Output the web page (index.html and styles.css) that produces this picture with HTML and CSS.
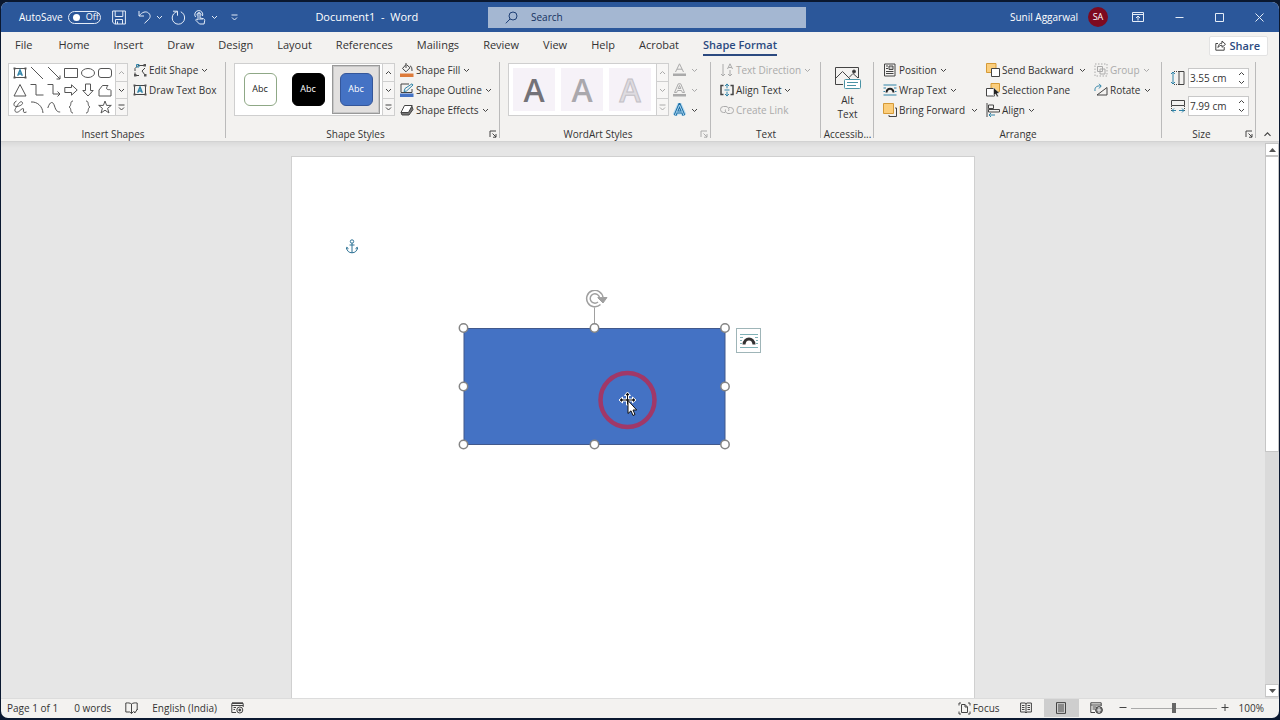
FILE: index.html
```html
<!DOCTYPE html>
<html lang="en">
<head>
<meta charset="utf-8">
<title>Document1 - Word</title>
<link rel="stylesheet" href="styles.css">
</head>
<body>
<svg class="sprite" aria-hidden="true">
  <symbol id="chev" viewBox="0 0 7 5"><path d="M1 1l2.500 2.500L6 1"/></symbol>
  <symbol id="chev-up" viewBox="0 0 7 5"><path d="M1 4l2.500-2.500L6 4"/></symbol>
  <symbol id="more" viewBox="0 0 7 7"><path d="M0.500 1h6M1 3.500l2.500 2.500L6 3.500"/></symbol>
  <symbol id="launch" viewBox="0 0 8 8"><path d="M1 7V1h6M3.500 3.500L7 7M7 4v3.200H4"/></symbol>
</svg>
<div class="app">
  <header class="titlebar">
    <div class="quick">
      <label class="autosave">AutoSave <input type="checkbox" class="hidden-check"><span class="switch"><i></i>Off</span></label>
      <button class="tb save" aria-label="Save"><svg width="14" height="15" viewBox="0 0 14 15"><path d="M.6 1h12.800v13H2.500L.6 12zM3.200 1v5.500h7.600V1M3.500 14V9.500h7V14M5.500 14v-2.500"/></svg></button>
      <button class="tb undo" aria-label="Undo"><svg width="13" height="14" viewBox="0 0 13 14"><path d="M1 1v5h5M1.200 5.800C4 2 8 .8 10.500 3s2 5-.5 7L6.500 13.300"/></svg><svg class="ic" width="7" height="5"><use href="#chev"/></svg></button>
      <button class="tb" aria-label="Redo"><svg width="15" height="15" viewBox="0 0 15 15"><path d="M2 1.200h4.500v4.500M6.300 1.500C3 2.500 1.200 5 1.200 8a6.200 6.200 0 0 0 12.400 0c0-3-1.400-5-3.800-6.200"/></svg></button>
      <button class="tb touch" aria-label="Touch mode"><svg width="12" height="15" viewBox="0 0 12 15"><path d="M1.600 7A4 4 0 1 1 8.500 6M3.200 5.500a2 2 0 1 1 3.600 0M4 10V4.200c0-1.500 2-1.500 2 0V8l3.500.7c1 .3 1.300 1 1.200 2l-.6 3.300H5.500L2 10.500c-.8-1 .5-1.700 2-.5M6 8v2M8 8.500V10"/></svg><svg class="ic" width="7" height="5"><use href="#chev"/></svg></button>
      <button class="tb" aria-label="Customize"><svg class="ic" width="7" height="7"><use href="#more"/></svg></button>
      <span class="doc-title">Document1 &nbsp;-&nbsp; Word</span>
    </div>
    <label class="search"><svg width="13" height="13" viewBox="0 0 13 13"><circle cx="8" cy="5" r="4"/><path d="M5 8L.8 12.300"/></svg><input type="text" placeholder="Search" aria-label="Search"></label>
    <div class="account">
      <span>Sunil Aggarwal</span><span class="avatar">SA</span>
      <button class="tb" aria-label="Ribbon display"><svg width="12" height="10" viewBox="0 0 12 10"><path d="M.5.5h11v9H.5zM.5 2.500h11M6 8.500v-4M4 6l2-2 2 2"/></svg></button>
      <button class="tb" aria-label="Minimize"><svg width="9" height="9" viewBox="0 0 9 9"><path d="M.5 4.500h8"/></svg></button>
      <button class="tb" aria-label="Maximize"><svg width="9" height="9" viewBox="0 0 9 9"><path d="M.5.500h8v8h-8z"/></svg></button>
      <button class="tb" aria-label="Close"><svg width="9" height="9" viewBox="0 0 9 9"><path d="M.5.500l8 8M8.500.500l-8 8"/></svg></button>
    </div>
  </header>

  <nav class="tabs">
    <button class="file">File</button><button>Home</button><button>Insert</button><button>Draw</button><button>Design</button><button>Layout</button><button>References</button><button>Mailings</button><button>Review</button><button>View</button><button>Help</button><button>Acrobat</button><button class="active">Shape Format</button>
    <button class="share"><svg width="11" height="11" viewBox="0 0 11 11"><path d="M3 3.500H.8v6.700h8.400V7M3 7.500C3.200 4.500 5 3.200 7 3.200V1l3.500 3.300L7 7.300V5.200C5.500 5.200 4 6 3 7.500z"/></svg>Share</button>
  </nav>

  <div class="ribbon">
    <section class="group g-insert">
      <div class="body">
        <div class="gallery">
          <div class="shapes">
            <button aria-label="Text box"><svg viewBox="0 0 14 14"><path d="M1.500 2.500h11v9h-11z"/><path class="dot" d="M.5 1.500h2v2h-2zM11.500 1.500h2v2h-2zM.5 10.500h2v2h-2zM11.500 10.500h2v2h-2z"/><path class="blue bold" d="M4.700 9.800L7 4l2.300 5.800M5.500 8h3"/></svg></button>
            <button aria-label="Line"><svg viewBox="0 0 14 14"><path d="M1 1l12 12"/></svg></button>
            <button aria-label="Arrow"><svg viewBox="0 0 14 14"><path d="M1 1l12 12M13 9.500V13H9.500"/></svg></button>
            <button aria-label="Rectangle"><svg viewBox="0 0 14 14"><path d="M.5 2.500h13v9H.5z"/></svg></button>
            <button aria-label="Oval"><svg viewBox="0 0 14 14"><ellipse cx="7" cy="7" rx="6.500" ry="4.500"/></svg></button>
            <button aria-label="Rounded rectangle"><svg viewBox="0 0 14 14"><rect x=".5" y="2.500" width="13" height="9" rx="2.500"/></svg></button>
            <button aria-label="Triangle"><svg viewBox="0 0 14 14"><path d="M7 1.500l6 11.500H1z"/></svg></button>
            <button aria-label="Elbow"><svg viewBox="0 0 14 14"><path d="M.5 1.500H6v10.500h7.500"/></svg></button>
            <button aria-label="Elbow arrow"><svg viewBox="0 0 14 14"><path d="M.5 1.500H6v9.500h7M10.500 8.500L13 11l-2.500 2.500"/></svg></button>
            <button aria-label="Right arrow"><svg viewBox="0 0 14 14"><path d="M.8 4.500h6.700V1.800L13.200 7l-5.700 5.200V9.500H.8z"/></svg></button>
            <button aria-label="Down arrow"><svg viewBox="0 0 14 14"><path d="M4.500 1h5v6.500h2.700L7 13 1.800 7.500h2.700z"/></svg></button>
            <button aria-label="Freeform"><svg viewBox="0 0 14 14"><path d="M1 13V7l3.500-4.500H10C8.500 4 8 6 9.500 6.500s3-.5 3.500 1V13z"/></svg></button>
            <button aria-label="Scribble"><svg viewBox="0 0 14 14"><path d="M3.500 1C0 2.500 0 7 4 6.500S11 3.500 9 2 4.500 5 2.500 8.500 4 13.500 6.500 11s4.500-3.500 4-1 .5 3 3 2"/></svg></button>
            <button aria-label="Arc"><svg viewBox="0 0 14 14"><path d="M1 2c6-.5 11.500 4 12 11"/></svg></button>
            <button aria-label="Curve"><svg viewBox="0 0 14 14"><path d="M.8 8C3 1 6 1 7.500 6s3 6 5.700 6"/></svg></button>
            <button aria-label="Left brace"><svg viewBox="0 0 14 14"><path d="M9 1C5.500 1 8 6 5 7c3 1 .5 6 4 6"/></svg></button>
            <button aria-label="Right brace"><svg viewBox="0 0 14 14"><path d="M5 1c3.500 0 1 5 4 6-3 1-.5 6-4 6"/></svg></button>
            <button aria-label="Star"><svg viewBox="0 0 14 14"><path d="M7 1l1.600 4.400h4.700L9.600 8.300 11 13 7 10.200 3 13l1.400-4.700L.7 5.400h4.700z"/></svg></button>
          </div>
          <div class="scroller"><button class="off" aria-label="Up"><svg class="ic" width="7" height="5"><use href="#chev-up"/></svg></button><button aria-label="Down"><svg class="ic" width="7" height="5"><use href="#chev"/></svg></button><button aria-label="More"><svg class="ic" width="7" height="7"><use href="#more"/></svg></button></div>
        </div>
        <div class="col">
          <button class="cmd"><svg width="14" height="14" viewBox="0 0 14 14"><path d="M2 12.500V9.500M2 8V5.500L5 2.500h6M6 12.500H3M12 5L9 8l3 4"/><path class="dot" d="M1 11h2.500v2.500H1zM10.500 1H13v2.500h-2.500zM11 11h2.500v2.500H11z"/><path class="blue" d="M3.500 1.500H6V4H3.500z"/></svg>Edit Shape<svg class="ic" width="7" height="5"><use href="#chev"/></svg></button>
          <button class="cmd"><svg width="14" height="14" viewBox="0 0 14 14"><path d="M1.500 2.500h11v9h-11z"/><path class="dot" d="M.5 1.500h2v2h-2zM11.500 1.500h2v2h-2zM.5 10.500h2v2h-2zM11.500 10.500h2v2h-2z"/><path class="blue bold" d="M4.700 9.800L7 4l2.300 5.800M5.500 8h3"/></svg>Draw Text Box</button>
        </div>
      </div>
      <div class="label">Insert Shapes</div>
    </section>

    <section class="group g-styles">
      <div class="body">
        <div class="gallery">
          <div class="cells"><button><span class="swatch outline">Abc</span></button><button><span class="swatch black">Abc</span></button><button class="selected"><span class="swatch fill">Abc</span></button></div>
          <div class="scroller"><button aria-label="Up"><svg class="ic" width="7" height="5"><use href="#chev-up"/></svg></button><button aria-label="Down"><svg class="ic" width="7" height="5"><use href="#chev"/></svg></button><button aria-label="More"><svg class="ic" width="7" height="7"><use href="#more"/></svg></button></div>
        </div>
        <div class="col">
          <button class="cmd"><svg width="14" height="14" viewBox="0 0 14 14"><path d="M6 0v5M6 1.500L2.500 5.500 6 8.800 10 4.800 7 2M10 3c1.500 0 2 2 2 5"/><path fill="#dd7b3b" stroke="none" d="M0 10.500h13.500V14H0z"/></svg>Shape Fill<svg class="ic" width="7" height="5"><use href="#chev"/></svg></button>
          <button class="cmd"><svg width="14" height="14" viewBox="0 0 14 14"><path d="M9 1H1v8.500h11V6"/><path class="blue" d="M4 8.500l1-3L12 .8 13 2 6.500 8z"/><path fill="#4472c4" stroke="none" d="M0 10.500h13.500V14H0z"/></svg>Shape Outline<svg class="ic" width="7" height="5"><use href="#chev"/></svg></button>
          <button class="cmd"><svg width="14" height="14" viewBox="0 0 14 14"><path fill="#777" d="M1 9.500l1 2.500h7l4-5.500-1-3-4 6z"/><path fill="#fff" d="M4.500 2.500h7.700L8.500 9.500H1z"/></svg>Shape Effects<svg class="ic" width="7" height="5"><use href="#chev"/></svg></button>
        </div>
      </div>
      <div class="label with-launcher">Shape Styles<button class="launcher" aria-label="Format shape"><svg class="ic" width="8" height="8"><use href="#launch"/></svg></button></div>
    </section>

    <section class="group g-wordart">
      <div class="body">
        <div class="gallery">
          <div class="cells art"><button class="a1">A</button><button class="a2">A</button><button class="a3">A</button></div>
          <div class="scroller off"><button aria-label="Up"><svg class="ic" width="7" height="5"><use href="#chev-up"/></svg></button><button aria-label="Down"><svg class="ic" width="7" height="5"><use href="#chev"/></svg></button><button aria-label="More"><svg class="ic" width="7" height="7"><use href="#more"/></svg></button></div>
        </div>
        <div class="col">
          <button class="cmd off wide" aria-label="Text fill"><svg width="15" height="14" viewBox="0 0 15 14"><path d="M3.500 9L7.500 .8 11.500 9M5 6.200h5"/><path fill="#aaa" stroke="none" d="M1 10.500h13V13H1z"/></svg><svg class="ic" width="7" height="5"><use href="#chev"/></svg></button>
          <button class="cmd off wide" aria-label="Text outline"><svg width="15" height="14" viewBox="0 0 15 14"><path d="M2.500 9.500L6.300.8h2.400l3.800 8.700h-2.200L9.500 7.500h-4l-.8 2zM6.200 5.500h2.600L7.500 2.500z"/><path fill="#aaa" stroke="none" d="M1 11h13v2.500H1z"/></svg><svg class="ic" width="7" height="5"><use href="#chev"/></svg></button>
          <button class="cmd wide" aria-label="Text effects"><svg width="15" height="14" viewBox="0 0 15 14"><path class="glow" d="M3 12L7.500 2 12 12M5 9h5"/><path class="deep" d="M3 12.500L7.500 2 12 12.500M5 9h5"/><path class="core" d="M3 12.500L7.500 2 12 12.500M5 9h5"/></svg><svg class="ic" width="7" height="5"><use href="#chev"/></svg></button>
        </div>
      </div>
      <div class="label with-launcher">WordArt Styles<button class="launcher off" aria-label="Format text"><svg class="ic" width="8" height="8"><use href="#launch"/></svg></button></div>
    </section>

    <section class="group g-text">
      <div class="body">
        <div class="col">
          <button class="cmd off"><svg width="14" height="14" viewBox="0 0 14 14"><path d="M3 1v12M1 11l2 2 2-2M10 7v6M8 11l2 2 2-2M7.500 6L10 .8 12.500 6M8.300 4.500h3.400"/></svg>Text Direction<svg class="ic" width="7" height="5"><use href="#chev"/></svg></button>
          <button class="cmd"><svg width="14" height="14" viewBox="0 0 14 14"><path stroke-width="1.500" d="M3.500 2.500H1v9h2.500M10.500 2.500H13v9h-2.500"/><path class="blue" d="M4.500 7h5M7 .8v4.500M5 3l2-2 2 2M7 13.200V8.700M5 11l2 2 2-2"/></svg>Align Text<svg class="ic" width="7" height="5"><use href="#chev"/></svg></button>
          <button class="cmd off"><svg width="14" height="14" viewBox="0 0 14 14"><path d="M5 9.500H3.500a3 3 0 0 1 0-6H6a3 3 0 0 1 2.500 4.500M9 4.500h1.500a3 3 0 0 1 0 6H8a3 3 0 0 1-2.500-4"/></svg>Create Link</button>
        </div>
      </div>
      <div class="label">Text</div>
    </section>

    <section class="group g-alt">
      <div class="body">
        <button class="big"><svg width="28" height="26" viewBox="0 0 28 26"><path d="M9 19.500H1.500v-17h23V13"/><path d="M2 13l6.500-6.500L16 14M15 12.500l4-4 5 4.500"/><circle cx="20" cy="6.500" r="1.500" fill="#333"/><rect x="10.500" y="14.500" width="16" height="9" rx="1" fill="#fff" stroke="#4a93a5"/><path stroke="#4a93a5" d="M13 17.500h11M13 20.500h9"/></svg><span>Alt<br>Text</span></button>
      </div>
      <div class="label">Accessib...</div>
    </section>

    <section class="group g-arrange">
      <div class="body">
        <div class="col c1">
          <button class="cmd"><svg width="14" height="14" viewBox="0 0 14 14"><path d="M1.500 1h10.500v12H1.500zM3 10.500h7.500M3 8.500h7.500M3 3h2M3 5.500h2"/><path fill="#ccc" d="M6 3h4v3.500H6z"/></svg>Position<svg class="ic" width="7" height="5"><use href="#chev"/></svg></button>
          <button class="cmd"><svg width="14" height="14" viewBox="0 0 14 14"><path class="blue" d="M.5 2h13M.5 12h13M.5 5H3M11 5h2.500M.5 8.500H2M12 8.500h1.500"/><path stroke="#222" stroke-width="2" d="M3.500 9.500C4 4.500 10 4.500 10.500 9.500"/></svg>Wrap Text<svg class="ic" width="7" height="5"><use href="#chev"/></svg></button>
          <button class="cmd split"><svg width="14" height="14" viewBox="0 0 14 14"><path d="M12 5h1.500v8.500H6V12"/><path fill="#fbce7c" stroke="#d59a37" d="M.5.500h10v10H.5z"/></svg>Bring Forward<svg class="ic" width="7" height="5"><use href="#chev"/></svg></button>
        </div>
        <div class="col c2">
          <button class="cmd split"><svg width="14" height="14" viewBox="0 0 14 14"><path fill="#fbce7c" stroke="#d59a37" d="M.5.500h9.500v9H.5z"/><path fill="#fff" d="M5.500 5.500h8v8h-8z"/></svg>Send Backward<svg class="ic" width="7" height="5"><use href="#chev"/></svg></button>
          <button class="cmd"><svg width="14" height="14" viewBox="0 0 14 14"><path fill="#fbce7c" stroke="#d59a37" d="M5 .5h8.500v8H5z"/><path fill="#fff" d="M.5 5.500h8v7.500h-8z"/><path fill="#222" stroke="#fff" stroke-width=".5" d="M7.500 4.500v8l2-1.500 1.500 3 1.500-.7-1.400-2.800 2.400-.5z"/></svg>Selection Pane</button>
          <button class="cmd"><svg width="14" height="14" viewBox="0 0 14 14"><path d="M1 0v14M2.500 2h5v3.500h-5zM2.500 6.500h11V9h-11z"/><path class="blue" d="M3 12h6M5 10l-2 2 2 2"/></svg>Align<svg class="ic" width="7" height="5"><use href="#chev"/></svg></button>
        </div>
        <div class="col">
          <button class="cmd off"><svg width="14" height="14" viewBox="0 0 14 14"><path d="M3.500 3.500h5v5h-5zM6 6h5v5H6z"/><path stroke-dasharray="1.500 1.500" d="M1 1h12v12H1z"/></svg>Group<svg class="ic" width="7" height="5"><use href="#chev"/></svg></button>
          <button class="cmd"><svg width="14" height="14" viewBox="0 0 14 14"><path d="M13 4.500v7.500H3z"/><path class="blue" d="M1 8C.5 4 3 2.500 7 3M5 .8L7.200 3 5 5.500"/></svg>Rotate<svg class="ic" width="7" height="5"><use href="#chev"/></svg></button>
        </div>
      </div>
      <div class="label">Arrange</div>
    </section>

    <section class="group g-size">
      <div class="sizes">
        <label class="size"><svg width="15" height="16" viewBox="0 0 15 16"><path d="M9 1.500h5v13H9z"/><path stroke-dasharray="1 1" d="M4 1.500h5M4 14.500h5"/><path class="blue" d="M3 2v12M1 4l2-2 2 2M1 12l2 2 2-2"/></svg><span class="spin"><input type="text" value="3.55 cm" aria-label="Height"><span class="steps"><button aria-label="Increase height"><svg class="ic" width="7" height="5"><use href="#chev-up"/></svg></button><button aria-label="Decrease height"><svg class="ic" width="7" height="5"><use href="#chev"/></svg></button></span></span></label>
        <label class="size"><svg width="15" height="16" viewBox="0 0 15 16"><path d="M1.500 2.500h13v5h-13z"/><path stroke-dasharray="1 1" d="M1.500 8v5M14.500 8v5"/><path class="blue" d="M2 12.500h4M9 12.500h5M4 10.500l-2 2 2 2M12 10.500l2 2-2 2"/></svg><span class="spin"><input type="text" value="7.99 cm" aria-label="Width"><span class="steps"><button aria-label="Increase width"><svg class="ic" width="7" height="5"><use href="#chev-up"/></svg></button><button aria-label="Decrease width"><svg class="ic" width="7" height="5"><use href="#chev"/></svg></button></span></span></label>
      </div>
      <div class="label with-launcher">Size<button class="launcher" aria-label="Layout"><svg class="ic" width="8" height="8"><use href="#launch"/></svg></button></div>
    </section>
    <button class="collapse" aria-label="Collapse ribbon"><svg class="ic" width="9" height="6"><use href="#chev-up"/></svg></button>
  </div>

  <main class="work">
    <div class="desk">
      <div class="page">
        <svg class="anchor" width="12" height="15" viewBox="0 0 12 15"><circle cx="6" cy="2.500" r="1.700"/><path d="M6 4.200V14M3.500 6h5M.7 8.500C.7 12 3 13.800 6 13.800s5.300-1.800 5.300-5.300M.3 10.300l.5-2 1.700 1.400M11.700 10.300l-.5-2-1.700 1.400"/></svg>
        <svg class="drawing" width="310" height="170" viewBox="0 0 310 170">
          <rect x="14" y="38.500" width="261" height="116" fill="#4472c4" stroke="#41598c"/>
          <g fill="none" stroke="#a0a0a0">
            <path d="M144.500 17v18"/>
            <circle cx="145" cy="8.500" r="6.500" stroke="#fff" stroke-width="5"/>
            <path stroke-width="1.500" d="M150.500 14.500A8.200 8.200 0 1 1 153 7.500"/>
            <path stroke-width="1.500" d="M148 12A4.700 4.700 0 1 1 149.500 7.500"/>
            <path fill="#a0a0a0" d="M147.500 7.500h3M152.500 7.500h4.500l-4 5.500-5-5z"/>
          </g>
          <g fill="#fff" stroke="#858585" stroke-width="1.500">
            <circle cx="13.500" cy="38" r="4.200"/><circle cx="144.500" cy="38" r="4.200"/><circle cx="275" cy="38" r="4.200"/>
            <circle cx="13.500" cy="96.500" r="4.200"/><circle cx="275" cy="96.500" r="4.200"/>
            <circle cx="13.500" cy="154.500" r="4.200"/><circle cx="144.500" cy="154.500" r="4.200"/><circle cx="275" cy="154.500" r="4.200"/>
          </g>
          <circle cx="177.500" cy="110" r="27" fill="none" stroke="#a03868" stroke-width="4.500"/>
          <g fill="#111" stroke="#fff" stroke-width="1">
            <path d="M177.500 102l3 3.500h-2v3.500h4v-2l3.500 3-3.500 3v-2h-4v4h-2v-4h-4v2l-3.500-3 3.500-3v2h4v-3.500h-2z"/>
            <path fill="#fff" stroke="#111" d="M178 110.500v13l3-2.700 2 4.700 2-1-2-4.500h3.700z"/>
          </g>
        </svg>
        <button class="layout-options" aria-label="Layout Options"><svg width="20" height="20" viewBox="0 0 20 20"><path class="teal" d="M1 3.500h18M1 16.500h18M1 6.500h3M16 6.500h3M1 9.500h2M17 9.500h2M1 12.500h2M17 12.500h2"/><path stroke="#333" stroke-width="3" d="M5 13.500C5.500 6 14.500 6 15 13.500"/></svg></button>
      </div>
    </div>
    <div class="vscroll"><button aria-label="Scroll up"><svg width="7" height="4" viewBox="0 0 7 4"><path d="M0 4l3.500-4L7 4z"/></svg></button><div class="track"><div class="thumb"></div></div><button aria-label="Scroll down"><svg width="7" height="4" viewBox="0 0 7 4"><path d="M0 0l3.500 4L7 0z"/></svg></button></div>
  </main>

  <footer class="status">
    <span>Page 1 of 1</span><span>0 words</span>
    <button aria-label="Proofing"><svg width="13" height="12" viewBox="0 0 13 12"><path d="M6.500 2C5 .8 3 .8.800 1v9h4l1.700 1.500L8 10M6.500 2v9.500M6.500 2C8 .8 10 .8 12.200 1v7M8.500 9l1.300 2 2.700-4"/></svg></button>
    <span>English (India)</span>
    <button aria-label="Macro recording"><svg width="13" height="12" viewBox="0 0 13 12"><path d="M5 10.500H.8v-9h11.400V5M.8 3.500h11.400M2.500 5.500H5M2.500 7.500H4M1 .8h11"/><circle cx="8.800" cy="8" r="3"/><circle cx="8.800" cy="8" r="1" fill="#333"/></svg></button>
    <div class="views">
      <button class="focus"><svg width="13" height="13" viewBox="0 0 13 13"><path d="M3 1H1v2.500M10 1h2v2.500M1 9.500V12h2M12 9.500V12h-2M3.500 2.500h3.500l2.500 2.500v5.500h-6zM7 2.500V5h2.500"/></svg>Focus</button>
      <button class="view" aria-label="Read mode"><svg width="12" height="12" viewBox="0 0 12 12"><path d="M6 1.500v9.500M.6 1H5l1 .7L7 1h4.400v9H7l-1 1-1-1H.6zM2 3.500h2.500M2 5.500h2.500M2 7.500h2.500M7.500 3.500H10M7.500 5.500H10M7.500 7.500H10"/></svg></button>
      <button class="view on" aria-label="Print layout"><svg width="12" height="12" viewBox="0 0 12 12"><path d="M1.500.600h9v10.800h-9zM3 3h6M3 5h6M3 7h6M3 9h6"/></svg></button>
      <button class="view" aria-label="Web layout"><svg width="13" height="12" viewBox="0 0 13 12"><path d="M5 10.500H.8V.8h10.400V4M.8 3h10.400M2.500 5h4M2.500 7H5"/><circle cx="9" cy="8" r="3.400" fill="#777"/><path stroke="#eee" d="M9 5v6M7 8h4"/></svg></button>
      <button class="zoom-btn" aria-label="Zoom out"><svg width="8" height="8" viewBox="0 0 8 8"><path d="M.5 3.500h7"/></svg></button>
      <input type="range" min="0" max="100" value="50" aria-label="Zoom">
      <button class="zoom-btn" aria-label="Zoom in"><svg width="8" height="8" viewBox="0 0 8 8"><path d="M.5 3.500h7M4 0v7"/></svg></button>
      <span class="pct">100%</span>
    </div>
  </footer>
</div>
</body>
</html>
```

FILE: styles.css
```css
* { box-sizing: border-box; }
body {
  margin: 0;
  height: 100vh;
  padding: 2px 1px;
  background: #0a1830;
  font-family: "Open Sans", "Noto Sans", sans-serif;
  font-size: 10px;
  line-height: 14px;
  color: #333;
  overflow: hidden;
}
button, input { font: inherit; color: inherit; border: 0; padding: 0; margin: 0; background: none; }
svg { display: block; flex: none; fill: none; stroke: #444; }
.sprite { position: absolute; width: 0; height: 0; }
.ic { stroke: #444; }
.blue { stroke: #2f83a8; fill: none; }
.bold { stroke-width: 1.5; }
.dot { fill: #555; stroke: none; }

.app {
  display: flex;
  flex-direction: column;
  height: 100%;
  border-radius: 7px;
  overflow: hidden;
  background: #f3f2f0;
}

.titlebar {
  display: flex;
  align-items: center;
  flex: none;
  height: 30px;
  background: #2b579a;
  color: #fff;
}
.titlebar svg { stroke: #e4ecf7; }
.quick { display: flex; align-items: center; flex: 0 1 487px; padding-left: 18px; }
.tb { display: flex; align-items: center; gap: 5px; }
.autosave { display: flex; align-items: center; gap: 5px; }
.hidden-check { position: absolute; opacity: 0; }
.switch {
  display: flex;
  align-items: center;
  gap: 6px;
  width: 33px;
  height: 13px;
  padding-left: 4px;
  border: 1px solid #e4ecf7;
  border-radius: 7px;
  font-size: 9px;
}
.switch i { width: 7px; height: 7px; border-radius: 50%; background: #fff; }
.save { margin-left: 11px; }
.undo { margin: 0 8px 0 12px; }
.touch { margin: 0 13px 0 8px; }
.doc-title { margin: 0 auto; padding-left: 8px; font-size: 11px; white-space: nowrap; }
.search {
  display: flex;
  align-items: center;
  gap: 13px;
  flex: 0 1 318px;
  height: 21px;
  padding-left: 17px;
  background: #a4b7d2;
}
.titlebar .search svg { stroke: #1e3f75; }
.search input { flex: 1; min-width: 0; color: #16325f; outline: none; }
.search input::placeholder { color: #16325f; opacity: 1; }
.account { display: flex; align-items: center; margin-left: auto; padding-right: 15px; }
.avatar {
  width: 20px;
  height: 20px;
  margin: 0 24px 0 10px;
  border-radius: 50%;
  background: #7d0a20;
  font-size: 9px;
  line-height: 20px;
  text-align: center;
}
.account .tb + .tb { margin-left: 31px; }

.tabs {
  display: flex;
  align-items: center;
  gap: 24px;
  flex: none;
  height: 27px;
  padding: 0 11px 0 14px;
  font-size: 11px;
  white-space: nowrap;
}
.tabs button { height: 21px; border-bottom: 2px solid transparent; }
.tabs .file { margin-right: 2px; }
.tabs .active { color: #2b4a80; font-weight: 600; border-bottom-color: #2b4a80; }
.tabs .share {
  display: flex;
  align-items: center;
  gap: 3px;
  height: 20px;
  margin-left: auto;
  padding: 0 7px 0 5px;
  border: 1px solid #e3e3e3;
  border-radius: 2px;
  background: #fff;
  color: #2b4a80;
  font-weight: 600;
}

.ribbon {
  display: flex;
  flex: none;
  height: 83px;
  border-bottom: 1px solid #d2d2d2;
  background: #f3f2f0;
}
.group {
  display: flex;
  flex-direction: column;
  flex: none;
  position: relative;
  padding: 1px 0 0 8px;
}
.group::after {
  content: "";
  position: absolute;
  right: 0;
  top: 3px;
  bottom: 3px;
  width: 1px;
  background: #bbb;
}
.g-insert { width: 225px; padding-left: 7px; }
.g-styles { width: 274px; }
.g-wordart { width: 211px; }
.g-text { width: 110px; }
.g-alt { width: 53px; padding-left: 0; }
.g-arrange { width: 288px; }
.g-size { width: 94px; }
.body { display: flex; height: 61px; }
.label {
  position: relative;
  margin-left: -8px;
  padding-top: 6px;
  text-align: center;
  white-space: nowrap;
}
.with-launcher { padding-right: 15px; }
.g-alt .label { margin-left: 0; }
.launcher { position: absolute; right: 3px; top: 9px; }
.off { color: #aaa; }
.off svg { stroke: #aaa; }
.col { display: flex; flex-direction: column; padding-left: 5px; }
.g-text .col, .g-arrange .col { padding-left: 1px; }
.cmd { display: flex; align-items: center; gap: 2px; height: 20px; white-space: nowrap; }
.cmd .ic { margin-left: 1px; }
.wide { gap: 3px; }
.g-wordart .col { padding-left: 3px; }
.split .ic { margin-left: auto; }
.g-arrange .c1 { width: 103px; }
.g-arrange .c2 { width: 108px; }
.c1 .split { width: 95px; }
.c2 .split { width: 100px; }

.gallery {
  display: flex;
  height: 53px;
  margin-top: 3px;
  border: 1px solid #cfcfcf;
  background: #fff;
}
.shapes {
  display: grid;
  grid-template-columns: repeat(6, 17px);
  grid-auto-rows: 17px;
  padding-left: 2px;
  width: 106px;
}
.shapes button { display: grid; place-items: center; }
.shapes svg { width: 14px; height: 14px; stroke: #555; }
.scroller { display: grid; grid-template-rows: repeat(3, 1fr); width: 12px; border-left: 1px solid #cfcfcf; background: #f7f6f5; }
.scroller button { display: grid; place-items: center; }
.scroller button + button { border-top: 1px solid #cfcfcf; }
.cells { display: grid; grid-template-columns: repeat(3, 48px); padding: 1px; width: 147px; }
.cells button { display: grid; place-items: center; }
.cells .selected { border: 1px solid #999; background: #e2e0df; box-shadow: inset 0 0 0 1px #c6c6c6; }
.swatch {
  width: 33px;
  height: 33px;
  border-radius: 6px;
  line-height: 29px;
  font-size: 9px;
  border: 1px solid #8fa886;
  background: #fff;
  color: #222;
}
.swatch.black { background: #000; border-color: #000; color: #fff; }
.swatch.fill { background: #4472c4; border-color: #34569a; color: #fff; }
.art button { margin: 3px; background: #f6f2f8; font: 600 32px/42px "Open Sans", sans-serif; }
.art .a1 { color: #747278; }
.art .a2 { color: #aaa8ad; }
.art .a3 { color: #dedbe0; -webkit-text-stroke: 1px #c3c0c6; }
.glow { stroke: #b8dcf2; stroke-width: 5; }
.deep { stroke: #1e6fa5; stroke-width: 3; }
.core { stroke: #a9d4ee; stroke-width: 1; }

.big { display: flex; flex-direction: column; align-items: center; gap: 2px; width: 100%; padding-top: 5px; }
.big span { line-height: 14px; }
.sizes { display: flex; flex-direction: column; gap: 8px; height: 61px; padding-top: 8px; }
.size { display: flex; align-items: center; gap: 3px; }
.spin { display: flex; width: 61px; height: 20px; border: 1px solid #c8c8c8; background: #fff; }
.spin input { flex: 1; min-width: 0; padding-left: 1px; outline: none; }
.steps { display: grid; grid-template-rows: 1fr 1fr; width: 14px; place-items: center; }
.collapse { align-self: flex-end; margin: 0 auto; padding-bottom: 4px; }

.work { display: flex; flex: 1; min-height: 0; background: #e6e6e6; }
.desk {
  display: flex;
  flex: 1;
  justify-content: center;
  padding-top: 14px;
  background: linear-gradient(#dadada, #e6e6e6 6px);
}
.page {
  position: relative;
  flex: 0 1 684px;
  border: 1px solid #d0d0d0;
  border-bottom: 0;
  background: #fff;
}
.anchor { position: absolute; left: 54px; top: 82px; stroke: #2f7395; }
.drawing { position: absolute; left: 158px; top: 133px; }
.layout-options {
  position: absolute;
  left: 444px;
  top: 171px;
  width: 25px;
  height: 25px;
  display: grid;
  place-items: center;
  border: 1px solid #9fb5b8;
  background: #fff;
}
.teal { stroke: #7fb1b6; }
.vscroll { display: flex; flex-direction: column; width: 14px; padding: 1px 0; background: #dadada; }
.vscroll button { display: grid; place-items: center; height: 13px; background: #fff; border: 1px solid #c6c6c6; }
.vscroll svg { fill: #555; stroke: none; }
.track { flex: 1; }
.thumb { height: 56%; background: #fff; border: 1px solid #c6c6c6; }

.status { display: flex; align-items: center; flex: none; height: 20px; padding: 0 0 1px 6px; border-top: 1px solid #dcdcdc; white-space: nowrap; }
.status > span + span { margin-left: 16px; }
.status > button { margin: 0 14px; }
.views { display: flex; align-items: center; margin-left: auto; padding-right: 15px; }
.focus { display: flex; align-items: center; gap: 2px; margin-right: 9px; }
.view { display: grid; place-items: center; width: 35px; height: 18px; }
.view.on { background: #cecece; }
.zoom-btn { margin: 0 4px; }
.view + .zoom-btn { margin-left: 5px; }
.views input { appearance: none; width: 86px; height: 14px; }
.views input::-webkit-slider-runnable-track { height: 1px; background: #aaa; }
.views input::-webkit-slider-thumb { appearance: none; width: 4px; height: 10px; margin-top: -5px; background: #666; }
.pct { margin-left: 6px; }
```
